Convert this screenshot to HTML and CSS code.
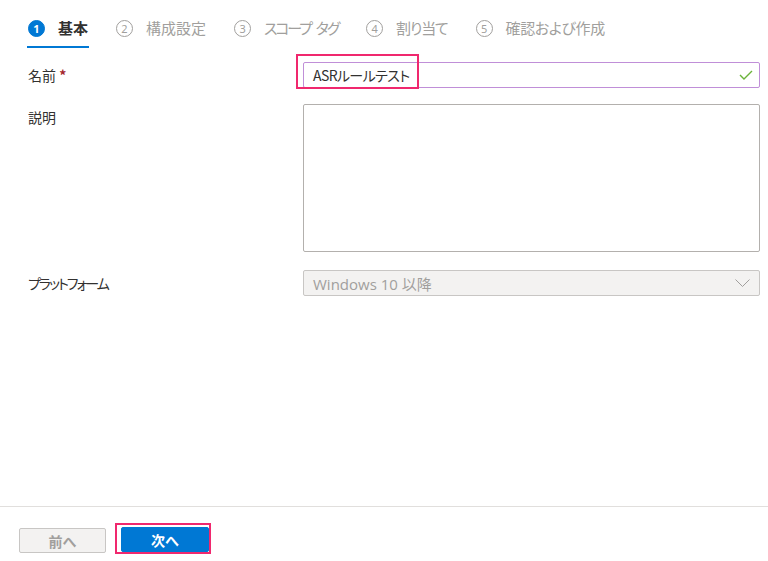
FILE: index.html
```html
<!DOCTYPE html>
<html lang="ja">
<head>
<meta charset="utf-8">
<title>ASR ルール</title>
<link rel="stylesheet" href="styles.css">
</head>
<body>
<div class="wizard">
  <nav class="tabs">
    <div class="tab active"><span class="num">1</span><span class="tab-label">基本</span></div>
    <div class="tab"><span class="num">2</span><span class="tab-label">構成設定</span></div>
    <div class="tab"><span class="num">3</span><span class="tab-label tight-3">スコープ タグ</span></div>
    <div class="tab"><span class="num">4</span><span class="tab-label tight-2">割り当て</span></div>
    <div class="tab"><span class="num">5</span><span class="tab-label tight-1">確認および作成</span></div>
  </nav>

  <main class="form">
    <div class="row">
      <label class="label">名前 <span class="req">*</span></label>
      <div class="field">
        <div class="input valid">ASRルールテスト</div>
        <svg class="check" width="14" height="10" viewBox="0 0 14 10"><path d="M1 5 L5 9 L13 1" fill="none" stroke="#6bb33a" stroke-width="1.4"/></svg>
        <span class="mark mark-name"></span>
      </div>
    </div>
    <div class="row row-desc">
      <label class="label">説明</label>
      <div class="field"><div class="textarea"></div></div>
    </div>
    <div class="row row-platform">
      <label class="label label-condensed">プラットフォーム</label>
      <div class="field">
        <div class="select">
          <span class="select-text">Windows 10 以降</span>
          <svg width="15" height="8" viewBox="0 0 15 8"><path d="M0.5 0.5 L7.5 7.5 L14.5 0.5" fill="none" stroke="#a19f9d" stroke-width="1"/></svg>
        </div>
      </div>
    </div>
  </main>

  <footer class="footer">
    <button class="btn btn-prev">前へ</button>
    <span class="hl"><button class="btn btn-next">次へ</button></span>
  </footer>
</div>
</body>
</html>
```

FILE: styles.css
```css
html, body {
  margin: 0;
  padding: 0;
  background: #ffffff;
}
body {
  font-family: "Noto Sans CJK JP", "Noto Sans", sans-serif;
  font-feature-settings: "palt";
  color: #323130;
}
.wizard {
  width: 768px;
  height: 561px;
  display: flex;
  flex-direction: column;
}
.tabs {
  display: flex;
  gap: 26px;
  padding: 18px 0 0 27px;
}
.tab {
  display: flex;
  align-items: center;
  gap: 13px;
  height: 20px;
  padding: 0 1px 8px 1px;
  border-bottom: 2px solid transparent;
  font-size: 15px;
  color: #a19f9d;
}
.tab.active {
  border-bottom-color: #0078d4;
  color: #323130;
  font-weight: 700;
}
.num {
  box-sizing: border-box;
  width: 17px;
  height: 17px;
  border-radius: 50%;
  border: 1px solid #a19f9d;
  display: flex;
  align-items: center;
  justify-content: center;
  font-size: 11px;
  font-weight: 400;
  line-height: 1;
  font-family: "Noto Sans", sans-serif;
}
.tab.active .num {
  background: #0078d4;
  border-color: #0078d4;
  color: #ffffff;
  font-weight: 700;
}
.tab-label {
  line-height: 20px;
  white-space: pre;
}
.tight-3 { letter-spacing: -2.2px; word-spacing: 4px; }
.tight-2 { letter-spacing: -1.2px; }
.tight-1 { letter-spacing: -0.4px; }
.form {
  flex: 1;
  padding: 14px 8px 0 28px;
}
.row {
  display: grid;
  grid-template-columns: 275px 457px;
}
.row-desc { margin-top: 16px; }
.row-platform { margin-top: 18px; }
.label {
  font-size: 14px;
  line-height: 26px;
  color: #323130;
}
.label-condensed {
  letter-spacing: -2px;
}
.req {
  color: #a4262c;
  font-weight: 700;
}
.field {
  position: relative;
}
.input {
  box-sizing: border-box;
  height: 26px;
  border: 1px solid #c08fd8;
  border-radius: 2px;
  padding: 0 9px;
  font-size: 14px;
  line-height: 24px;
  letter-spacing: -0.6px;
  color: #323130;
}
.check {
  position: absolute;
  right: 7px;
  top: 8px;
}
.mark {
  position: absolute;
  border: 2px solid #f0286e;
  box-sizing: border-box;
}
.mark-name {
  left: -7px;
  top: -8px;
  width: 123px;
  height: 35px;
}
.textarea {
  box-sizing: border-box;
  height: 148px;
  border: 1px solid #b3b0ad;
  border-radius: 2px;
}
.select {
  box-sizing: border-box;
  height: 26px;
  border: 1px solid #c8c6c4;
  border-radius: 2px;
  background: #f3f2f1;
  display: flex;
  align-items: center;
  justify-content: space-between;
  padding: 0 9px 0 9px;
  font-size: 15px;
  color: #a19f9d;
}
.select-text {
  font-family: "Open Sans", "Noto Sans CJK JP", sans-serif;
}
.footer {
  height: 55px;
  border-top: 1px solid #e1dfdd;
  display: flex;
  align-items: flex-start;
  padding: 16px 0 0 19px;
  box-sizing: border-box;
}
.btn {
  box-sizing: border-box;
  height: 25px;
  width: 88px;
  border-radius: 2px;
  font-family: inherit;
  font-size: 14px;
  font-weight: 700;
  padding: 0;
  cursor: pointer;
}
.btn-prev {
  margin-top: 5px;
  width: 87px;
  background: #f3f2f1;
  border: 1px solid #c8c6c4;
  color: #a19f9d;
}
.hl {
  display: inline-flex;
  margin-left: 9px;
  border: 2px solid #f0286e;
  padding: 2px 0 0 4px;
}
.btn-next {
  background: #0078d4;
  border: 1px solid #0078d4;
  color: #ffffff;
}
```
